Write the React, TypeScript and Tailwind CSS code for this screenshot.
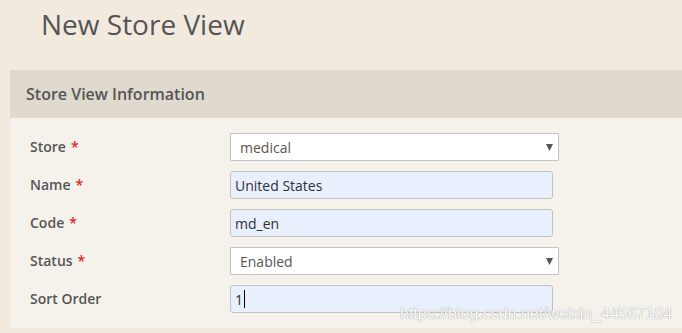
import React from "react";

const font = { fontFamily: '"Open Sans", "Noto Sans", sans-serif' };

function Label({ text, req }: { text: string; req?: boolean }) {
  return (
    <div className="w-[200px] text-[14px] font-semibold text-[#555] leading-none">
      {text}
      {req && <span className="ml-[5px] text-[#e22626]">*</span>}
    </div>
  );
}

function Select({ value }: { value: string }) {
  return (
    <div className="relative flex h-[28px] w-[329px] items-center rounded-[1px] border border-[#c2c2c2] bg-white pl-[9px] pt-[1px] text-[14px] text-[#5a5550]">
      {value}
      <svg className="absolute right-[5px] top-[10px]" width="7" height="7" viewBox="0 0 7 7">
        <path d="M0 0 H7 L3.5 7 Z" fill="#5a5550" />
      </svg>
    </div>
  );
}

function Input({ value, caret }: { value: string; caret?: boolean }) {
  return (
    <div className="flex h-[28px] w-[323px] items-center rounded-[3px] border border-[#c2c2c2] bg-[#e8f0fe] pl-[4px] text-[14px] text-[#303030]">
      {value}
      {caret && <span className="ml-[1px] inline-block h-[18px] w-[1px] bg-black" />}
    </div>
  );
}

function Row({ children }: { children: React.ReactNode }) {
  return <div className="flex items-center">{children}</div>;
}

export default function App() {
  return (
    <div className="relative h-[333px] w-[682px] overflow-hidden bg-[#f2eadf]" style={font}>
      <div className="h-[70px] pl-[41px] pt-[2px] text-[28px] leading-[44px] text-[#555]">New Store View</div>
      <div className="ml-[10px]">
        <div className="flex h-[48px] items-center bg-[#e0d9cd] pl-[16px] text-[16px] font-semibold text-[#555]">
          Store View Information
        </div>
        <div className="flex h-[210px] flex-col gap-[10px] bg-[#f5f2ec] pl-[20px] pt-[15px]">
          <Row>
            <Label text="Store" req />
            <Select value="medical" />
          </Row>
          <Row>
            <Label text="Name" req />
            <Input value="United States" />
          </Row>
          <Row>
            <Label text="Code" req />
            <Input value="md_en" />
          </Row>
          <Row>
            <Label text="Status" req />
            <Select value="Enabled" />
          </Row>
          <Row>
            <Label text="Sort Order" />
            <Input value="1" caret />
          </Row>
        </div>
      </div>
      <div
        className="absolute left-[400px] top-[304px] text-[16px] leading-[20px] text-[#fdfdfd] [text-shadow:0_0_1px_#a8a8a8,0_0_1px_#a8a8a8]"
        style={{ fontFamily: '"Liberation Sans", Arial, sans-serif' }}
      >
        https://blog.csdn.net/weixin_44567104
      </div>
    </div>
  );
}
